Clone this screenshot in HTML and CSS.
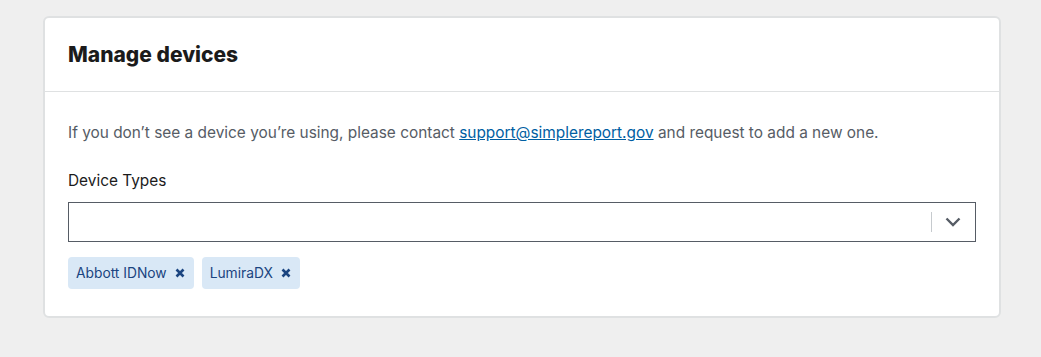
FILE: index.html
```html
<!DOCTYPE html>
<html lang="en">
<head>
<meta charset="utf-8">
<link rel="stylesheet" href="styles.css">
</head>
<body>
<div class="page">
  <section class="card">
    <header class="card-header">
      <h2 class="title">Manage devices</h2>
    </header>
    <div class="card-body">
      <p class="intro">If you don’t see a device you’re using, please contact <a href="#" class="link">support@simplereport.gov</a> and request to add a new one.</p>
      <label class="label">Device Types</label>
      <div class="select">
        <div class="select-value"></div>
        <div class="select-indicators">
          <span class="sep"></span>
          <svg class="chev" width="16" height="10" viewBox="0 0 16 10"><path d="M1.5 1.5 L8 8 L14.5 1.5" fill="none" stroke="#565c65" stroke-width="2.4" stroke-linecap="butt"/></svg>
        </div>
      </div>
      <div class="tags">
        <span class="tag">Abbott IDNow <svg class="x" width="10" height="10" viewBox="0 0 10 10"><path d="M1.5 1.5 L8.5 8.5 M8.5 1.5 L1.5 8.5" stroke="#1a4480" stroke-width="2.6"/></svg></span>
        <span class="tag">LumiraDX <svg class="x" width="10" height="10" viewBox="0 0 10 10"><path d="M1.5 1.5 L8.5 8.5 M8.5 1.5 L1.5 8.5" stroke="#1a4480" stroke-width="2.6"/></svg></span>
      </div>
    </div>
  </section>
</div>
</body>
</html>
```
FILE: styles.css
```css
* { box-sizing: border-box; }
html, body { margin: 0; padding: 0; }
body {
  background: #efefef;
  font-family: "Inter", "Liberation Sans", sans-serif;
  color: #1b1b1b;
}
.page {
  padding: 16px 40px 0 43px;
}
.card {
  width: 958px;
  height: 302px;
  background: #fff;
  border: 2px solid #dfe1e2;
  border-radius: 6px;
}
.card-header {
  height: 74px;
  border-bottom: 1px solid #dfe1e2;
  padding: 0 23px 1px;
  display: flex;
  align-items: center;
}
.title {
  margin: 0;
  font-size: 21px;
  font-weight: 800;
  color: #1b1b1b;
}
.card-body {
  padding: 0 23px;
}
.intro {
  margin: 30px 0 0;
  font-size: 15.4px;
  line-height: 22px;
  color: #565c65;
}
.link {
  color: #005ea2;
  text-decoration: underline;
}
.label {
  display: block;
  margin-top: 26px;
  font-size: 15.4px;
  line-height: 22px;
  color: #1b1b1b;
}
.select {
  margin-top: 10px;
  height: 40px;
  border: 1px solid #565c65;
  display: flex;
  align-items: center;
}
.select-value { flex: 1; }
.select-indicators {
  display: flex;
  align-items: center;
  height: 100%;
}
.sep {
  width: 1px;
  height: 20px;
  background: #c6cace;
}
.chev {
  margin: 0 14px 0 13px;
  display: block;
}
.tags {
  display: flex;
  gap: 8px;
  margin-top: 15px;
}
.tag {
  display: inline-flex;
  align-items: center;
  gap: 8px;
  height: 32px;
  padding: 0 9px 0 8px;
  background: #d9e8f6;
  border-radius: 4px;
  color: #1a4480;
  font-size: 13.8px;
}
.x { display: block; }
```
